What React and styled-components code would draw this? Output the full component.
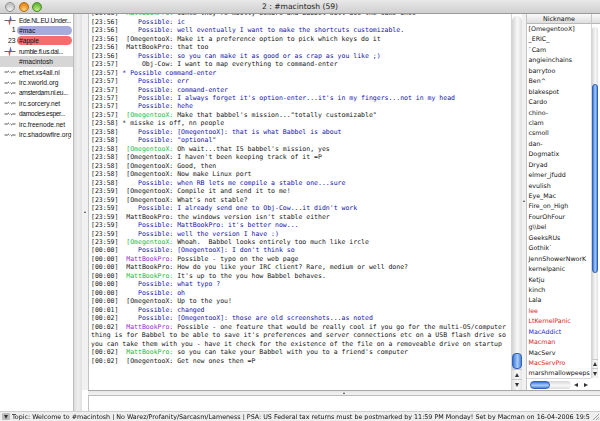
import React from "react";
import styled, { createGlobalStyle } from "styled-components";

const GlobalStyle = createGlobalStyle`
  html, body { margin: 0; padding: 0; background: #fff; }
`;

const BLUE = "#1414ac";
const BLACK = "#161616";
const GREEN = "#18b83c";
const PURPLE = "#9a1fd4";

const UI_FONT = `"DejaVu Sans", sans-serif`;

const Window = styled.div`
  width: 600px;
  height: 421px;
  display: flex;
  flex-direction: column;
  overflow: hidden;
  filter: blur(0.3px);
  font-family: ${UI_FONT};
`;

const TitleBar = styled.div`
  height: 14px;
  flex: none;
  position: relative;
  display: flex;
  align-items: center;
  justify-content: center;
  background: linear-gradient(#e9e9e9, #cfcfcf);
  border-bottom: 1px solid #9a9a9a;
  box-sizing: border-box;
  font-size: 7.6px;
  color: #222;
`;

const Lights = styled.div`
  position: absolute;
  left: 5px;
  top: 2px;
  display: flex;
  gap: 3.5px;
`;

const Light = styled.span`
  width: 10px;
  height: 10px;
  border-radius: 50%;
  border: 1px solid ${(p) => p.$edge};
  box-sizing: border-box;
  background: radial-gradient(circle at 50% 85%, ${(p) => p.$glow}, ${(p) => p.$base} 70%);
`;

const Body = styled.div`
  flex: 1;
  min-height: 0;
  display: flex;
`;

const Sidebar = styled.div`
  width: 74px;
  flex: none;
  padding-top: 0.8px;
  box-sizing: border-box;
  background: #fff;
  border-right: 1px solid #bdbdbd;
`;

const SideRow = styled.div`
  height: 10.43px;
  display: grid;
  grid-template-columns: 16.5px 1fr;
  align-items: center;
  font-family: "Liberation Sans", sans-serif;
  font-size: 6.65px;
  line-height: 10.43px;
  white-space: nowrap;
  color: #111;
  background: ${(p) => (p.$selected ? "#d6d6d6" : "transparent")};
`;

const SideSlot = styled.span`
  display: flex;
  justify-content: flex-end;
  align-items: center;
  padding: 0 1px 0 3px;
  font-size: 6.8px;
`;

const SideLabel = styled.span`
  overflow: hidden;
  margin-right: 1px;
  padding-left: 2.5px;
  border-radius: 5px;
  height: 9px;
  line-height: 9px;
  letter-spacing: ${(p) => (p.$tight ? "-0.35px" : "0")};
  background: ${(p) => p.$pill || "transparent"};
`;

const SideGutter = styled.div`
  width: 8px;
  flex: none;
  background: linear-gradient(90deg, #dcdcdc, #efefef 50%, #e0e0e0);
`;

const Center = styled.div`
  flex: 1;
  min-width: 0;
  display: flex;
  flex-direction: column;
`;

const TopRow = styled.div`
  flex: 1;
  min-height: 0;
  display: flex;
`;

const VSplit = styled.div`
  flex: none;
  width: ${(p) => p.$w}px;
  display: flex;
  flex-direction: column;
  align-items: center;
  padding-top: ${(p) => p.$dot}px;
  box-sizing: border-box;
  background: #f1f1f1;
  &::before {
    content: "";
    width: 0;
    height: 0;
    border-left: 1.5px solid transparent;
    border-right: 1.5px solid transparent;
    border-bottom: 2px solid #444;
  }
`;

const Log = styled.div`
  flex: 1;
  min-width: 0;
  display: flex;
  flex-direction: column;
  justify-content: flex-end;
  overflow: hidden;
  padding: 0 0 25px 2px;
  background: #fff;
  border-left: 1px solid #c4c4c4;
  font-family: "DejaVu Sans Mono", monospace;
  font-size: 6.5px;
  line-height: 8.48px;
  white-space: pre;
  color: ${BLACK};
`;

const LogRow = styled.div`
  height: 8.48px;
  flex: none;
  color: ${(p) => p.$color || BLACK};
`;

const Nick = styled.span`
  color: ${(p) => p.$color};
`;

const VScroll = styled.div`
  flex: none;
  width: ${(p) => p.$w}px;
  display: flex;
  flex-direction: column;
  align-items: stretch;
  background: #fff;
  border-left: 1px solid #d4d4d4;
  box-sizing: border-box;
`;

const VTrack = styled.div`
  flex: 1;
  min-height: 0;
  margin-top: ${(p) => p.$capTop}px;
  padding-top: ${(p) => p.$thumbTop}px;
  box-sizing: border-box;
  border-radius: 5px 5px 0 0;
  background: linear-gradient(90deg, #d4d4d4, #f8f8f8 55%, #dedede);
`;

const VThumb = styled.div`
  height: ${(p) => p.$h}px;
  border-radius: 4px;
  border: 1px solid #2f62b8;
  box-sizing: border-box;
  background: linear-gradient(90deg, #3a74d8, #a9cdf6 55%, #4a86e0);
`;

const Arrow = styled.div`
  flex: none;
  height: ${(p) => p.$size}px;
  display: flex;
  align-items: center;
  justify-content: center;
  background: linear-gradient(90deg, #e0e0e0, #fafafa 55%, #e4e4e4);
  border-top: 1px solid #c8c8c8;
  box-sizing: border-box;
`;

const NickPanel = styled.div`
  width: 74px;
  flex: none;
  display: grid;
  grid-template-columns: 1fr 7px 2px;
  grid-template-rows: 10px 1fr 12px;
  background: #fff;
  border-left: 1px solid #c4c4c4;
  box-sizing: border-box;
  min-height: 0;
`;

const NickHead = styled.div`
  display: flex;
  align-items: center;
  justify-content: center;
  grid-column: ${(p) => (p.$fill ? "2 / 4" : "1")};
  font-size: 6.4px;
  font-weight: 500;
  color: #111;
  background: linear-gradient(#fbfbfb, #dedede);
  border-bottom: 1px solid #b8b8b8;
  border-left: ${(p) => (p.$fill ? "1px solid #c8c8c8" : "none")};
  box-sizing: border-box;
`;

const NickList = styled.div`
  overflow: hidden;
  padding: 0 0 0 1.5px;
  min-width: 0;
`;

const NickItem = styled.div`
  height: 10.44px;
  line-height: 10.44px;
  font-size: 6.3px;
  white-space: nowrap;
  color: ${(p) => p.$color || "#111"};
`;

const NickEnd = styled.div`
  grid-row: 2 / 4;
  grid-column: 3;
  background: #fff;
`;

const HScroll = styled.div`
  display: flex;
  align-items: center;
  background: #fff;
  padding: 0 0 0 3px;
  border-top: 1px solid #d8d8d8;
`;

const HTrack = styled.div`
  flex: 1;
  height: 8px;
  border-radius: 4px 5px 5px 4px;
  background: linear-gradient(#d4d4d4, #f8f8f8 55%, #dcdcdc);
`;

const HThumb = styled.div`
  width: 20px;
  height: 8px;
  border-radius: 4px;
  border: 1px solid #2f62b8;
  box-sizing: border-box;
  background: linear-gradient(#3a74d8, #a9cdf6 55%, #4a86e0);
`;

const HArrow = styled.div`
  flex: none;
  width: 10px;
  height: 8px;
  display: flex;
  align-items: center;
  justify-content: center;
`;

const HSplit = styled.div`
  flex: none;
  height: 6px;
  display: flex;
  justify-content: center;
  align-items: center;
  background: linear-gradient(#e8e8e8, #f2f2f2);
  border-top: 1px solid #a8a8a8;
  border-bottom: 1px solid #bcbcbc;
  margin-left: 6px;
  box-sizing: border-box;
  &::before {
    content: "";
    width: 0;
    height: 0;
    border-left: 1.5px solid transparent;
    border-right: 1.5px solid transparent;
    border-bottom: 2px solid #444;
  }
`;

const InputBox = styled.div`
  flex: none;
  height: 15px;
  margin-left: 6px;
  background: #fff;
  border-left: 1px solid #c4c4c4;
`;

const TopicBar = styled.div`
  flex: none;
  height: 10px;
  display: flex;
  align-items: center;
  background: #eeeeee;
  border-top: 1px solid #cfcfcf;
  box-sizing: border-box;
  font-size: 6.36px;
  color: #111;
  white-space: nowrap;
`;

const TopicToggle = styled.div`
  flex: none;
  width: 8px;
  height: 7px;
  margin: 0 2px 0 2px;
  display: flex;
  align-items: center;
  justify-content: center;
  background: #bdbdbd;
  border-radius: 1px;
`;

const TopicText = styled.div`
  flex: 1;
  min-width: 0;
  overflow: hidden;
`;

const Grip = styled.div`
  flex: none;
  width: 9px;
  height: 9px;
  display: flex;
`;

function Tri({ dir, size = 4, color = "#333" }) {
  const pts = {
    up: "0,4 2,0 4,4",
    down: "0,0 4,0 2,4",
    left: "4,0 4,4 0,2",
    right: "0,0 4,2 0,4",
  }[dir];
  return (
    <svg width={size} height={size} viewBox="0 0 4 4">
      <polygon points={pts} fill={color} />
    </svg>
  );
}

function ActiveLink() {
  return (
    <svg width="12" height="9" viewBox="0 0 12 9">
      <path d="M6.5 0.3V4" stroke="#3a3ac8" strokeWidth="0.8" fill="none" />
      <path d="M5 2.6L6.5 4 8 2.6" stroke="#3a3ac8" strokeWidth="0.7" fill="none" />
      <path d="M0.5 4.5H11.5" stroke="#555" strokeWidth="0.9" />
      <path d="M5.5 8.7V5" stroke="#d83030" strokeWidth="0.8" fill="none" />
      <path d="M4 6.4L5.5 5 7 6.4" stroke="#d83030" strokeWidth="0.7" fill="none" />
    </svg>
  );
}

function IdleLink() {
  return (
    <svg width="12" height="6" viewBox="0 0 12 6">
      <path d="M0.5 3H3.5L5 1.8M7 4.2L8.5 3H11.5" stroke="#444" strokeWidth="0.9" fill="none" />
      <path d="M5 3.8L7 2.2" stroke="#888" strokeWidth="0.6" fill="none" />
    </svg>
  );
}

const servers = [
  { kind: "active", label: "Ede.NL.EU.Under..." },
  { badge: "1", label: "#mac", pill: "#a6abdd" },
  { badge: "23", label: "#apple", pill: "#f46c6c" },
  { kind: "active", label: "rumble.fl.us.dal..." },
  { label: "#macintosh", selected: true },
  { kind: "idle", label: "efnet.xs4all.nl" },
  { kind: "idle", label: "irc.xworld.org" },
  { kind: "idle", label: "amsterdam.nl.eu..." },
  { kind: "idle", label: "irc.sorcery.net" },
  { kind: "idle", label: "damocles.esper..." },
  { kind: "idle", label: "irc.freenode.net" },
  { kind: "idle", label: "irc.shadowfire.org" },
];

const P = "Possible:";
const O = "[OmegentooX:";
const M = "MattBookPro:";

// [time, nick, message, nick colour, message colour]
const log = [
  ["23:56", M, "since they're mostly Lemurs and Babbel will use the same ones", GREEN],
  ["23:56", P, "ic", BLUE, BLUE],
  ["23:56", P, "well eventually I want to make the shortcuts customizable.", BLUE, BLUE],
  ["23:56", O, "Make it a preference option to pick which keys do it"],
  ["23:56", M, "that too"],
  ["23:56", P, "so you can make it as good or as crap as you like ;)", BLUE, BLUE],
  ["23:57", "Obj-Cow:", "I want to map everything to command-enter"],
  ["23:57", null, "* Possible command-enter", null, BLUE],
  ["23:57", P, "err", BLUE, BLUE],
  ["23:57", P, "command-enter", BLUE, BLUE],
  ["23:57", P, "I always forget it's option-enter...it's in my fingers...not in my head", BLUE, BLUE],
  ["23:57", P, "hehe", BLUE, BLUE],
  ["23:57", O, "Make that babbel's mission...\"totally customizable\"", GREEN],
  ["23:58", null, "* misske is off, nn people"],
  ["23:58", P, "[OmegentooX]: that is what Babbel is about", BLUE, BLUE],
  ["23:58", P, "\"optional\"", BLUE, BLUE],
  ["23:58", O, "Oh wait...that IS babbel's mission, yes", GREEN],
  ["23:58", O, "I haven't been keeping track of it =P"],
  ["23:58", O, "Good, then"],
  ["23:58", O, "Now make Linux port"],
  ["23:58", P, "when RB lets me compile a stable one...sure", BLUE, BLUE],
  ["23:59", O, "Compile it and send it to me!"],
  ["23:59", O, "What's not stable?"],
  ["23:59", P, "I already send one to Obj-Cow...it didn't work", BLUE, BLUE],
  ["23:59", M, "the windows version isn't stable either"],
  ["23:59", P, "MattBookPro: it's better now...", BLUE, BLUE],
  ["23:59", P, "well the version I have :)", BLUE, BLUE],
  ["23:59", O, "Whoah.  Babbel looks entirely too much like ircle", GREEN],
  ["00:00", P, "[OmegentooX]: I don't think so", BLUE, BLUE],
  ["00:00", M, "Possible - typo on the web page", PURPLE],
  ["00:00", M, "How do you like your IRC client? Rare, medium or well done?"],
  ["00:00", M, "It's up to the you how Babbel behaves.", GREEN],
  ["00:00", P, "what typo ?", BLUE, BLUE],
  ["00:00", P, "oh", BLUE, BLUE],
  ["00:00", O, "Up to the you!"],
  ["00:01", P, "changed", BLUE, BLUE],
  ["00:02", P, "[OmegentooX]: those are old screenshots...as noted", BLUE, BLUE],
  ["00:02", M, "Possible - one feature that would be really cool if you go for the multi-OS/computer", PURPLE],
  [null, null, "thing is for Babbel to be able to save it's preferences and server connections etc on a USB flash drive so"],
  [null, null, "you can take them with you - have it check for the existence of the file on a removeable drive on startup"],
  ["00:02", M, "so you can take your Babbel with you to a friend's computer", GREEN],
  ["00:02", O, "Get new ones then =P"],
];

const RED = "#dc2020";
const nicks = [
  ["[OmegentooX]"], ["_ERIC_"], ["`Cam"], ["angieinchains"], ["barrytoo"], ["Ben^"],
  ["blakespot"], ["Cardo"], ["chino-"], ["clam"], ["csmoll"], ["dan-"], ["Dogmatix"],
  ["Dryad"], ["elmer_jfudd"], ["evulish"], ["Eye_Mac"], ["Fire_on_High"], ["FourOhFour"],
  ["g\\\\bel"], ["GeeksRUs"], ["Gothik`"], ["JennShowerNworK"], ["kernelpanic"], ["Ketju"],
  ["kinch"], ["Lala"], ["lee", RED], ["LtKernelPanic", RED], ["MacAddict", "#1c1ce0"],
  ["Macman", RED], ["MacServ"], ["MacServPro", RED], ["marshmallowpeeps"],
];

function LogLine({ row }) {
  const [time, nick, text, nickColor, textColor] = row;
  if (!time) return <LogRow>{text}</LogRow>;
  if (!nick) return <LogRow $color={textColor}><Nick $color={BLACK}>[{time}] </Nick>{text}</LogRow>;
  return (
    <LogRow $color={textColor}>
      <Nick $color={BLACK}>[{time}]</Nick>
      <Nick $color={nickColor || BLACK}>{nick.padStart(14)}</Nick> {text}
    </LogRow>
  );
}

export default function App() {
  return (
    <>
      <GlobalStyle />
      <Window>
        <TitleBar>
          <Lights>
            <Light $edge="#8f8f8f" $base="#c4c4c4" $glow="#f0f0f0" />
            <Light $edge="#b06a10" $base="#e88a1c" $glow="#ffd27a" />
            <Light $edge="#4a8a20" $base="#6cb83a" $glow="#c4f08a" />
          </Lights>
          2 : #macintosh (59)
        </TitleBar>
        <Body>
          <Sidebar>
            {servers.map((s) => (
              <SideRow key={s.label} $selected={s.selected}>
                <SideSlot>
                  {s.kind === "active" && <ActiveLink />}
                  {s.kind === "idle" && <IdleLink />}
                  {s.badge}
                </SideSlot>
                <SideLabel $pill={s.pill} $tight={s.label.endsWith("...")}>{s.label}</SideLabel>
              </SideRow>
            ))}
          </Sidebar>
          <SideGutter />
          <Center>
            <TopRow>
              <VSplit $w={6} $dot={197} />
              <Log>
                {log.map((row, i) => (
                  <LogLine key={i} row={row} />
                ))}
              </Log>
              <VScroll $w={11}>
                <VTrack $capTop={2} $thumbTop={337}>
                  <VThumb $h={16} />
                </VTrack>
                <Arrow $size={10}><Tri dir="up" /></Arrow>
                <Arrow $size={11}><Tri dir="down" /></Arrow>
              </VScroll>
              <VSplit $w={4} $dot={186} />
              <NickPanel>
                <NickHead>Nickname</NickHead>
                <NickHead $fill />
                <NickList>
                  {nicks.map(([name, color]) => (
                    <NickItem key={name} $color={color}>{name}</NickItem>
                  ))}
                </NickList>
                <VScroll $w={7}>
                  <VTrack $capTop={3} $thumbTop={57}>
                    <VThumb $h={189} />
                  </VTrack>
                  <Arrow $size={9}><Tri dir="up" /></Arrow>
                  <Arrow $size={10}><Tri dir="down" /></Arrow>
                </VScroll>
                <NickEnd />
                <HScroll>
                  <HTrack><HThumb /></HTrack>
                  <HArrow><Tri dir="left" /></HArrow>
                  <HArrow><Tri dir="right" /></HArrow>
                </HScroll>
              </NickPanel>
            </TopRow>
            <HSplit />
            <InputBox />
          </Center>
        </Body>
        <TopicBar>
          <TopicToggle><Tri dir="down" color="#333" /></TopicToggle>
          <TopicText>
            Topic: Welcome to #macintosh | No Warez/Profanity/Sarcasm/Lameness | PSA: US Federal tax returns must be postmarked by 11:59 PM Monday! Set by Macman on 16-04-2006 19:5
          </TopicText>
          <Grip>
            <svg width="9" height="9" viewBox="0 0 9 9">
              <path d="M8 2L2 8M8 5L5 8M8 7.5L7.5 8" stroke="#888" strokeWidth="0.8" />
            </svg>
          </Grip>
        </TopicBar>
      </Window>
    </>
  );
}
